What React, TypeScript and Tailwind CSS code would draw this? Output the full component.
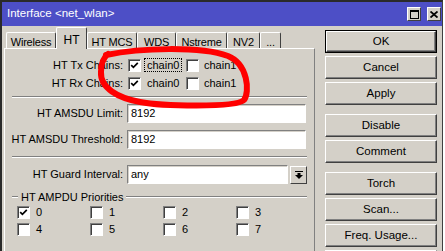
import clsx from 'clsx';

type CheckProps = { checked?: boolean };

function Check({ checked = false }: CheckProps) {
    return (
        <span className="flex h-[13px] w-[13px] shrink-0 items-center justify-center border border-t-[#808080] border-l-[#808080] border-r-white border-b-white bg-white shadow-[inset_1px_1px_0_#404040]">
            {checked && (
                <svg width="9" height="9" viewBox="0 0 9 9">
                    <path d="M1.2 4.2 L3.4 6.4 L7.8 1.8" stroke="#000" strokeWidth="1.7" fill="none" />
                </svg>
            )}
        </span>
    );
}

function Etched({ className }: { className?: string }) {
    return <div className={clsx('h-[2px] border-t border-t-[#808080] border-b border-b-white', className)} />;
}

function Label({ text }: { text: string }) {
    return <span className="flex w-[111px] shrink-0 justify-end whitespace-nowrap">{text}</span>;
}

function Field({ value, className }: { value: string; className?: string }) {
    return (
        <div
            className={clsx(
                'flex h-[19px] items-center border border-t-[#808080] border-l-[#808080] border-r-white border-b-white bg-white pl-[3px] shadow-[inset_1px_1px_0_#d4d0c8]',
                className,
            )}
        >
            {value}
        </div>
    );
}

function Btn({ label, primary }: { label: string; primary?: boolean }) {
    return (
        <div className={clsx('h-[23px] w-[112px] shrink-0', primary && 'border border-black')}>
            <div className="flex h-full items-center justify-center border border-t-white border-l-white border-r-[#404040] border-b-[#404040] shadow-[inset_-1px_-1px_0_#808080]">
                {label}
            </div>
        </div>
    );
}

const tabs = [
    { label: 'Wireless', w: 'w-[50px]' },
    { label: 'HT', w: 'w-[31px]', active: true },
    { label: 'HT MCS', w: 'w-[50px]' },
    { label: 'WDS', w: 'w-[39px]' },
    { label: 'Nstreme', w: 'w-[51px]' },
    { label: 'NV2', w: 'w-[33px]' },
    { label: '...', w: 'w-[21px]' },
];

const priorities = [
    { n: '0', checked: true },
    { n: '1' },
    { n: '2' },
    { n: '3' },
    { n: '4' },
    { n: '5' },
    { n: '6' },
    { n: '7' },
];

function ChainRow({ label, focused }: { label: string; focused?: boolean }) {
    return (
        <div className="flex h-[18px] items-center">
            <span className="flex w-[112px] justify-end whitespace-nowrap pr-[1px]">{label}</span>
            <div className="ml-[4px] flex w-[58px] items-center">
                <Check checked />
                <span className={clsx('ml-[3px] px-[2px] leading-[12px]', focused ? 'border border-dotted border-black' : 'border border-transparent')}>
                    chain0
                </span>
            </div>
            <div className="flex items-center">
                <Check />
                <span className="ml-[5px]">chain1</span>
            </div>
        </div>
    );
}

export default function App() {
    return (
        <div className="relative h-[251px] w-[445px] overflow-hidden bg-white font-['Liberation_Sans',Arial,sans-serif] text-[11px] text-black">
            <div className="flex h-[260px] w-[443px] flex-col border-t-2 border-l-2 border-r border-t-[#2a2a2a] border-l-[#2a2a2a] border-r-[#404040] bg-[#d4d0c8]">
                <div className="flex h-[24px] shrink-0 items-center bg-[#4d4fc6] pl-[5px] pr-[1px] text-[11.5px] text-white">
                    <span className="flex-1">Interface &lt;net_wlan&gt;</span>
                    <div className="flex items-center gap-[6px]">
                        <span className="flex h-[14px] w-[14px] items-center justify-center border border-t-white border-l-white border-r-[#404040] border-b-[#404040] bg-[#d4d0c8]">
                            <svg width="9" height="9" viewBox="0 0 9 9">
                                <rect x="0.5" y="0.5" width="8" height="8" fill="none" stroke="#000" />
                                <rect x="0" y="0" width="9" height="2" fill="#000" />
                            </svg>
                        </span>
                        <span className="flex h-[14px] w-[14px] items-center justify-center border border-t-white border-l-white border-r-[#404040] border-b-[#404040] bg-[#d4d0c8]">
                            <svg width="8" height="7" viewBox="0 0 8 7">
                                <path d="M0.5 0.5 L7.5 6.5 M7.5 0.5 L0.5 6.5" stroke="#000" strokeWidth="1.8" />
                            </svg>
                        </span>
                    </div>
                </div>

                <div className="flex min-h-0 flex-1">
                    <div className="flex w-[315px] flex-col pl-[2px]">
                        <div className="flex h-[22px] items-end pl-[2px]">
                            {tabs.map((t) => (
                                <div
                                    key={t.label}
                                    className={clsx(
                                        'flex shrink-0 justify-center whitespace-nowrap rounded-t-[2px] border-t border-l border-r border-t-white border-l-white border-r-[#404040] bg-[#d4d0c8]',
                                        t.w,
                                        t.active ? 'relative z-10 -mb-px h-[22px] pt-[3px] text-[12px]' : 'h-[16px] pt-[1px] tracking-[-0.2px]',
                                    )}
                                >
                                    {t.label}
                                </div>
                            ))}
                        </div>

                        <div className="flex w-[311px] flex-1 flex-col border-t border-l border-r border-t-white border-l-white border-r-[#808080] pl-[7px] pt-[7px]">
                            <ChainRow label="HT Tx Chains:" focused />
                            <ChainRow label="HT Rx Chains:" />
                            <Etched className="mt-[4px] w-[295px]" />

                            <div className="mt-[6px] flex items-center">
                                <Label text="HT AMSDU Limit:" />
                                <Field value="8192" className="ml-[4px] w-[179px]" />
                            </div>
                            <div className="mt-[7px] flex items-center">
                                <Label text="HT AMSDU Threshold:" />
                                <Field value="8192" className="ml-[4px] w-[179px]" />
                            </div>
                            <Etched className="mt-[7px] w-[295px]" />

                            <div className="mt-[7px] flex items-center">
                                <Label text="HT Guard Interval:" />
                                <Field value="any" className="ml-[4px] w-[161px]" />
                                <span className="ml-[2px] flex h-[18px] w-[17px] items-center justify-center border border-t-white border-l-white border-r-[#404040] border-b-[#404040]">
                                    <svg width="8" height="8" viewBox="0 0 8 8">
                                        <rect x="0" y="0" width="8" height="1" fill="#000" />
                                        <rect x="2.5" y="2" width="3" height="2" fill="#000" />
                                        <polygon points="0,4 8,4 4,8" fill="#000" />
                                    </svg>
                                </span>
                            </div>

                            <div className="mt-[6px] flex h-[14px] w-[295px] items-center">
                                <Etched className="w-[6px]" />
                                <span className="whitespace-nowrap px-[3px]">HT AMPDU Priorities</span>
                                <Etched className="flex-1" />
                            </div>

                            <div className="ml-[5px] mt-[2px] grid w-[292px] grid-cols-4 gap-y-[4px]">
                                {priorities.map((p) => (
                                    <div key={p.n} className="flex h-[13px] items-center">
                                        <Check checked={p.checked} />
                                        <span className="ml-[6px]">{p.n}</span>
                                    </div>
                                ))}
                            </div>
                        </div>
                    </div>

                    <div className="ml-[8px] flex flex-col pt-[4px] text-[11.5px]">
                        <div className="flex flex-col gap-[3px]">
                            <Btn label="OK" primary />
                            <Btn label="Cancel" />
                            <Btn label="Apply" />
                        </div>
                        <div className="mt-[9px] flex flex-col gap-[3px]">
                            <Btn label="Disable" />
                            <Btn label="Comment" />
                        </div>
                        <div className="mt-[9px] flex flex-col gap-[3px]">
                            <Btn label="Torch" />
                            <Btn label="Scan..." />
                            <Btn label="Freq. Usage..." />
                            <Btn label="" />
                        </div>
                    </div>
                </div>
            </div>

            <svg className="pointer-events-none absolute left-0 top-0" width="445" height="251" viewBox="0 0 445 251">
                <path
                    d="M106 55 C140 48, 200 46, 228 56 C248 64, 250 92, 244 100 C236 108, 160 106, 140 102 C118 98, 100 88, 101 72 C101 63, 103 58, 108 54"
                    stroke="#ff0000"
                    strokeWidth="6"
                    strokeLinecap="round"
                    fill="none"
                />
            </svg>
        </div>
    );
}
